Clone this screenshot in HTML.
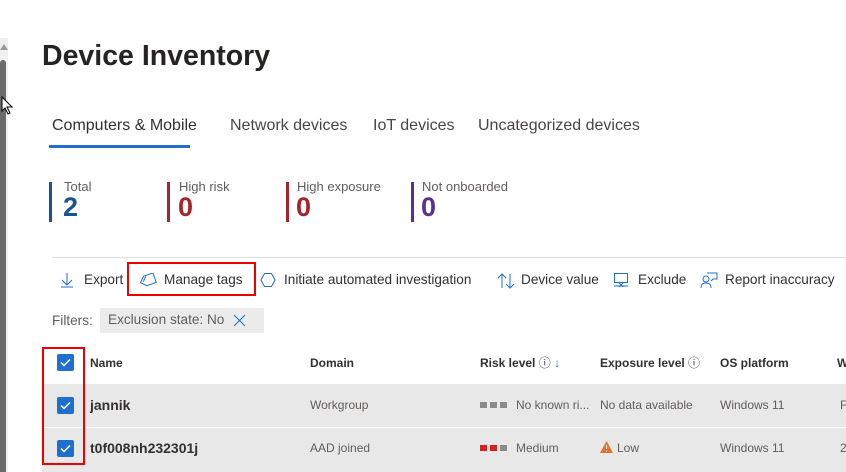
<!DOCTYPE html>
<html><head><meta charset="utf-8"><style>
*{margin:0;padding:0;box-sizing:border-box}
body{width:846px;height:472px;overflow:hidden;background:#fff;font-family:"Segoe UI","Liberation Sans",sans-serif;color:#323130;position:relative}
.a{position:absolute;white-space:nowrap}
.cb{position:absolute;left:57px;width:17px;height:17px;background:#1f6fd0;border-radius:2px}
.cb svg{position:absolute;left:3px;top:4px}
.t{font-size:13.6px}
.g{color:#605e5c}
.h{font-size:12px;font-weight:600;line-height:16px}
</style></head><body>
<div class="a" style="left:0;top:38px;width:8px;height:434px;background:#f0f0f0"></div>
<div class="a" style="left:0;top:60px;width:6px;height:412px;background:#6a6a6a;border-radius:3px 3px 0 0"></div>
<div class="a" style="left:0;top:44px;width:0;height:0;border-left:4px solid transparent;border-right:4px solid transparent;border-bottom:6px solid #999"></div>
<svg class="a" style="left:1px;top:96px" width="14" height="20"><path d="M1 1 L1 15 L4 12 L7 18 L9 17 L6 11 L11 11 Z" fill="#fff" stroke="#000" stroke-width="1"/></svg>

<div class="a" style="left:42px;top:40px;font-size:28.5px;font-weight:bold;color:#252423">Device Inventory</div>

<div class="a" style="left:52px;top:117px;font-size:16px;color:#323130">Computers &amp; Mobile</div>
<div class="a" style="left:49px;top:145px;width:141px;height:3px;background:#1f6fd0"></div>
<div class="a" style="left:230px;top:117px;font-size:16px;color:#484644">Network devices</div>
<div class="a" style="left:373px;top:117px;font-size:16px;color:#484644">IoT devices</div>
<div class="a" style="left:478px;top:117px;font-size:16px;color:#484644">Uncategorized devices</div>

<div class="a" style="left:49px;top:182px;width:3px;height:40px;background:#1a5296"></div>
<div class="a g" style="left:64px;top:179px;font-size:13px">Total</div>
<div class="a" style="left:63px;top:192px;font-size:27px;font-weight:bold;color:#1a5296">2</div>
<div class="a" style="left:167px;top:182px;width:3px;height:40px;background:#a4262c"></div>
<div class="a g" style="left:179px;top:179px;font-size:13px">High risk</div>
<div class="a" style="left:178px;top:192px;font-size:27px;font-weight:bold;color:#a4262c">0</div>
<div class="a" style="left:286px;top:182px;width:3px;height:40px;background:#a4262c"></div>
<div class="a g" style="left:297px;top:179px;font-size:13px">High exposure</div>
<div class="a" style="left:296px;top:192px;font-size:27px;font-weight:bold;color:#a4262c">0</div>
<div class="a" style="left:411px;top:182px;width:3px;height:40px;background:#5c2e91"></div>
<div class="a g" style="left:422px;top:179px;font-size:13px">Not onboarded</div>
<div class="a" style="left:421px;top:192px;font-size:27px;font-weight:bold;color:#5c2e91">0</div>

<div class="a" style="left:52px;top:257px;width:794px;height:1px;background:#e1dfdd"></div>

<svg class="a" style="left:60px;top:272px" width="14" height="16"><path d="M7 1V13M2 8L7 13L12 8M1 15H13" stroke="#1f6fd0" fill="none" stroke-width="1"/></svg>
<div class="a t" style="left:84px;top:272px">Export</div>
<div class="a" style="left:127px;top:262px;width:129px;height:34px;border:2px solid #e00"></div>
<svg class="a" style="left:139px;top:273px" width="18" height="14"><path d="M1 7L6 2H16V12H6Z M4 7 L8 3" stroke="#1f6fd0" fill="none" stroke-width="1" transform="rotate(-20 9 7)"/></svg>
<div class="a t" style="left:164px;top:272px">Manage tags</div>
<svg class="a" style="left:260px;top:272px" width="16" height="16"><path d="M4.5 1.5H11.5L15 8L11.5 14.5H4.5L1 8Z" stroke="#1f6fd0" fill="none"/></svg>
<div class="a t" style="left:284px;top:272px">Initiate automated investigation</div>
<svg class="a" style="left:497px;top:273px" width="18" height="16"><path d="M5 15V1M1 5L5 1L9 5M13 1V15M9 11L13 15L17 11" stroke="#1f6fd0" fill="none"/></svg>
<div class="a t" style="left:521px;top:272px">Device value</div>
<svg class="a" style="left:613px;top:272px" width="16" height="16"><rect x="1.5" y="1.5" width="13" height="9" stroke="#1f6fd0" fill="none"/><path d="M1 14H15M6 11L10 15M10 11L6 15" stroke="#1f6fd0"/></svg>
<div class="a t" style="left:638px;top:272px">Exclude</div>
<svg class="a" style="left:700px;top:271px" width="18" height="18"><circle cx="6" cy="8" r="3" stroke="#1f6fd0" fill="none"/><path d="M1 17C1 13 3 12 6 12C9 12 11 13 11 17M7 2H17V8H13L11 10" stroke="#1f6fd0" fill="none"/></svg>
<div class="a t" style="left:725px;top:272px">Report inaccuracy</div>

<div class="a t g" style="left:52px;top:313px">Filters:</div>
<div class="a" style="left:100px;top:308px;width:164px;height:25px;background:#ebebeb"></div>
<div class="a t g" style="left:108px;top:312px">Exclusion state: No</div>
<svg class="a" style="left:233px;top:314px" width="13" height="13"><path d="M1 1L12 12M12 1L1 12" stroke="#1f6fd0"/></svg>

<div class="a" style="left:42px;top:384px;width:804px;height:43px;background:#e8e8e8"></div>
<div class="a" style="left:42px;top:428px;width:804px;height:44px;background:#e8e8e8"></div>

<div class="a" style="left:42px;top:347px;width:43px;height:118px;border:2px solid #e00"></div>
<div class="cb" style="top:354px"><svg width="11" height="9"><path d="M1 4.5L4 7.5L10 1.5" stroke="#fff" fill="none" stroke-width="1.5"/></svg></div>
<div class="cb" style="top:397px"><svg width="11" height="9"><path d="M1 4.5L4 7.5L10 1.5" stroke="#fff" fill="none" stroke-width="1.5"/></svg></div>
<div class="cb" style="top:440px"><svg width="11" height="9"><path d="M1 4.5L4 7.5L10 1.5" stroke="#fff" fill="none" stroke-width="1.5"/></svg></div>

<div class="a h" style="left:90px;top:355px">Name</div>
<div class="a h" style="left:310px;top:355px">Domain</div>
<div class="a h" style="left:480px;top:355px">Risk level <span style="font-weight:normal">ⓘ</span> <span style="color:#1f6fd0;font-weight:normal">↓</span></div>
<div class="a h" style="left:600px;top:355px">Exposure level <span style="font-weight:normal">ⓘ</span></div>
<div class="a h" style="left:720px;top:355px">OS platform</div>
<div class="a h" style="left:837px;top:355px">W</div>

<div class="a" style="left:90px;top:397px;font-size:14px;font-weight:600">jannik</div>
<div class="a g" style="left:310px;top:398px;font-size:12px">Workgroup</div>
<div class="a" style="left:480px;top:402px;width:7px;height:6px;background:#8a8a8a;box-shadow:10px 0 #8a8a8a,20px 0 #8a8a8a"></div>
<div class="a g" style="left:516px;top:398px;font-size:12px">No known ri...</div>
<div class="a g" style="left:600px;top:398px;font-size:12px">No data available</div>
<div class="a g" style="left:720px;top:398px;font-size:12px">Windows 11</div>
<div class="a g" style="left:840px;top:398px;font-size:12px">F</div>

<div class="a" style="left:90px;top:440px;font-size:14px;font-weight:600">t0f008nh232301j</div>
<div class="a g" style="left:310px;top:441px;font-size:12px">AAD joined</div>
<div class="a" style="left:480px;top:445px;width:7px;height:6px;background:#d92020;box-shadow:10px 0 #d92020,20px 0 #8a8a8a"></div>
<div class="a g" style="left:516px;top:441px;font-size:12px">Medium</div>
<svg class="a" style="left:600px;top:441px" width="13" height="12"><path d="M6.5 0L13 12H0Z" fill="#e8702a"/><path d="M6.5 4V8M6.5 9.5V10.5" stroke="#fff"/></svg>
<div class="a g" style="left:617px;top:441px;font-size:12px">Low</div>
<div class="a g" style="left:720px;top:441px;font-size:12px">Windows 11</div>
<div class="a g" style="left:840px;top:441px;font-size:12px">2</div>
</body></html>
